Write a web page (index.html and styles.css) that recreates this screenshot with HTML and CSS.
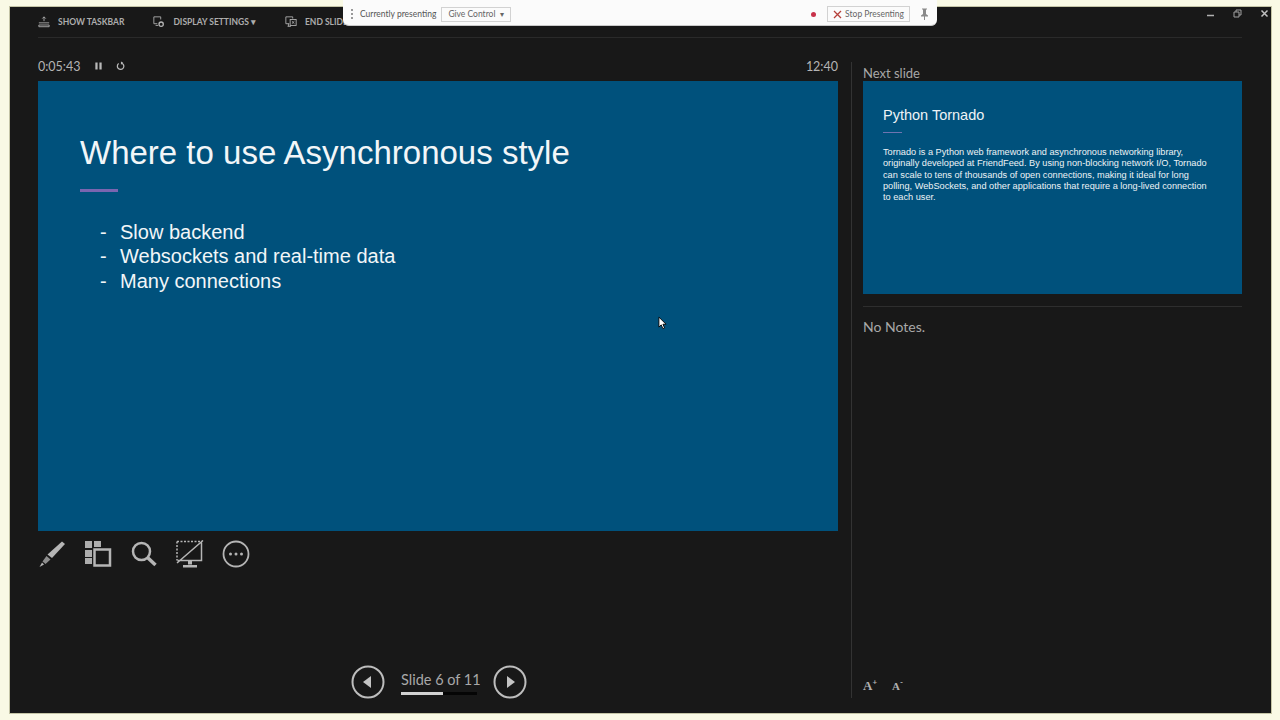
FILE: index.html
```html
<!DOCTYPE html>
<html lang="en">
<head>
<meta charset="utf-8">
<title>Presenter View</title>
<link rel="stylesheet" href="styles.css">
</head>
<body>
<div class="window">
  <header class="toolbar">
    <div class="tool-item">
      <svg class="tb-icon" viewBox="0 0 14 12"><path d="M7 0v5M5 2l2-2 2 2M1 7h12M1 9.500h12v2H1z" fill="none" stroke="#b5b5b5"/></svg>
      <span>SHOW TASKBAR</span>
    </div>
    <div class="tool-item">
      <svg class="tb-icon" viewBox="0 0 14 14"><path d="M5 9H1V1h8v3M3 11h3" fill="none" stroke="#b5b5b5"/><circle cx="9.500" cy="9.500" r="2.500" fill="none" stroke="#b5b5b5" stroke-width="1.500"/></svg>
      <span>DISPLAY SETTINGS ▾</span>
    </div>
    <div class="tool-item">
      <svg class="tb-icon" viewBox="0 0 14 14"><path d="M5 9H1V1h8v2M3 12h4M4 9v3" fill="none" stroke="#b5b5b5"/><rect x="6" y="4" width="7" height="7" fill="none" stroke="#b5b5b5"/><path d="M8 6l3 3M11 6l-3 3" stroke="#b5b5b5"/></svg>
      <span>END SLIDE SHOW</span>
    </div>
    <div class="win-controls">
      <svg class="win-icon" viewBox="0 0 9 9"><path d="M1 6.500h7" stroke="#b0b0b0" stroke-width="1.500"/></svg>
      <svg class="win-icon" viewBox="0 0 9 9"><path d="M1 3h5v5H1zM3 3V1h5v5H6" fill="none" stroke="#a0a0a0"/></svg>
      <svg class="win-icon" viewBox="0 0 9 9"><path d="M1.500 1.500l6 6M7.500 1.500l-6 6" stroke="#c0c0c0" stroke-width="1.500"/></svg>
    </div>
  </header>

  <main class="panes">
    <section class="current">
      <div class="timer-row">
        <span class="time">0:05:43</span>
        <svg class="timer-icon" viewBox="0 0 10 10"><path d="M1.500 1h2.500v8H1.500zM6 1h2.500v8H6z" fill="#b8b8b8"/></svg>
        <svg class="timer-icon" viewBox="0 0 10 10"><path d="M3 2.300a3.600 3.600 0 1 0 3.500-.4" fill="none" stroke="#b8b8b8" stroke-width="1.400"/><path d="M5.500 0v3.500L8 1.500z" fill="#b8b8b8"/></svg>
        <span class="clock">12:40</span>
      </div>
      <div class="slide">
        <h1>Where to use Asynchronous style</h1>
        <div class="rule"></div>
        <ul>
          <li>Slow backend</li>
          <li>Websockets and real-time data</li>
          <li>Many connections</li>
        </ul>
        <svg class="cursor" viewBox="0 0 10 15"><path d="M1 1v11l2.600-2.400 1.800 4.200 1.900-.8-1.800-4.100H9z" fill="#fff" stroke="#000"/></svg>
      </div>
      <div class="tools">
        <svg class="tool" viewBox="0 0 28 28"><path d="M24 1.500l3 2.500-13 14-4.500-3.500z" fill="#b5b5b5"/><path d="M8.500 16l4 3.500-5 4.500-3-2.500z" fill="#8e8e8e"/><path d="M4 22.500l2 2-4.500 2.500z" fill="#b5b5b5"/></svg>
        <svg class="tool" viewBox="0 0 28 28"><path d="M1 1h7v7H1zM10 1h7v6h-7zM1 10h7v7H1zM1 18h7v6H1z" fill="#adadad"/><path d="M10.500 9.500h15.500v16H10.500z" fill="none" stroke="#b5b5b5" stroke-width="2.500"/></svg>
        <svg class="tool" viewBox="0 0 28 28"><circle cx="11.500" cy="11.500" r="8.500" fill="none" stroke="#b5b5b5" stroke-width="2.500"/><path d="M17.500 17.500l8 7.500" stroke="#b5b5b5" stroke-width="3.500"/></svg>
        <svg class="tool" viewBox="0 0 28 28"><path d="M1 1.500h25M1 1.500v19" fill="none" stroke="#b5b5b5" stroke-width="1.500" stroke-dasharray="2 1.500"/><path d="M1.500 20.500h24V2.500M1 23L27 .5" fill="none" stroke="#b5b5b5" stroke-width="1.500"/><path d="M12 20.500h4v4h-4zM7 25h14v2.500H7z" fill="#b5b5b5"/></svg>
        <svg class="tool" viewBox="0 0 28 28"><circle cx="14" cy="14" r="12.500" fill="none" stroke="#b5b5b5" stroke-width="1.800"/><circle cx="8.500" cy="14" r="1.500" fill="#b5b5b5"/><circle cx="14" cy="14" r="1.500" fill="#b5b5b5"/><circle cx="19.500" cy="14" r="1.500" fill="#b5b5b5"/></svg>
      </div>
      <nav class="pager">
        <svg class="nav-btn" viewBox="0 0 34 34"><circle cx="17" cy="17" r="15.500" fill="none" stroke="#bdbdbd" stroke-width="2"/><path d="M20 11v12l-8-6z" fill="#c4c4c4"/></svg>
        <div class="count">
          <span>Slide 6 of 11</span>
          <div class="track"><div class="fill" style="width:55%"></div></div>
        </div>
        <svg class="nav-btn" viewBox="0 0 34 34"><circle cx="17" cy="17" r="15.500" fill="none" stroke="#bdbdbd" stroke-width="2"/><path d="M14 11v12l8-6z" fill="#c4c4c4"/></svg>
      </nav>
    </section>

    <aside class="side">
      <div class="next-label">Next slide</div>
      <div class="preview">
        <h2>Python Tornado</h2>
        <div class="mini-rule"></div>
        <p>Tornado is a Python web framework and asynchronous networking library, originally developed at FriendFeed. By using non-blocking network I/O, Tornado can scale to tens of thousands of open connections, making it ideal for long polling, WebSockets, and other applications that require a long-lived connection to each user.</p>
      </div>
      <div class="notes">No Notes.</div>
      <div class="font-tools">
        <span class="font-a big">A<sup>+</sup></span>
        <span class="font-a small">A<sup>-</sup></span>
      </div>
    </aside>
  </main>
</div>

<div class="share-bar">
  <div class="share-left">
    <span class="grip"></span>
    <span class="share-text">Currently presenting</span>
    <span class="share-btn">Give Control <i class="caret">▾</i></span>
  </div>
  <div class="share-right">
    <span class="rec"></span>
    <span class="share-btn stop">
      <svg class="x-icon" viewBox="0 0 9 9"><path d="M1 1l7 7M8 1L1 8" stroke="#b5403a" stroke-width="1.300"/></svg>
      Stop Presenting
    </span>
    <svg class="pin" viewBox="0 0 9 12"><path d="M2 .500h5v1H6v4.500l2 1.500v1H5v3.500H4V8.500H1v-1l2-1.500V1.500H2z" fill="#8a8a8a"/></svg>
  </div>
</div>
</body>
</html>
```
FILE: styles.css
```css
html, body { margin: 0; height: 100%; }
body {
  background: #f9f9e5;
  font-family: Lato, "Open Sans", sans-serif;
  color: #b4b4b4;
  overflow: hidden;
  padding: 6px 8px 6px 9px;
  box-sizing: border-box;
}
.window {
  height: 708px;
  background: #181818;
  border: 1px solid #c4c4a6;
  box-sizing: border-box;
  padding: 0 29px 0 28px;
  display: flex;
  flex-direction: column;
}
.toolbar {
  height: 31px;
  flex: none;
  border-bottom: 1px solid #2a2a2a;
  display: flex;
  align-items: center;
  gap: 29px;
  font-size: 8.500px;
  font-weight: 700;
  color: #adadad;
  padding-top: 0;
  box-sizing: border-box;
  position: relative;
}
.tool-item { display: flex; align-items: center; gap: 8px; white-space: nowrap; }
.tb-icon { width: 12px; height: 12px; }
.win-controls {
  position: absolute;
  right: -27px;
  top: 2px;
  display: flex;
  gap: 18px;
}
.win-icon { width: 9px; height: 9px; }
.panes { flex: 1; display: flex; min-height: 0; }
.current {
  width: 800px;
  flex: none;
  display: flex;
  flex-direction: column;
}
.timer-row {
  height: 43px;
  display: flex;
  align-items: center;
  font-size: 12.500px;
  padding-top: 13px;
  box-sizing: border-box;
  gap: 13px;
}
.clock { margin-left: auto; }
.timer-icon { width: 9px; height: 10px; }
.slide {
  height: 450px;
  background: #00517c;
  color: #f2f6f8;
  font-family: "Liberation Sans", Arial, sans-serif;
  padding: 53px 0 0 42px;
  box-sizing: border-box;
  position: relative;
}
.slide h1 { margin: 0; font-size: 33px; font-weight: 400; line-height: 38px; }
.rule { width: 38px; height: 3px; background: #7a65b0; margin-top: 17px; }
.slide ul { list-style: none; margin: 28px 0 0; padding: 0 0 0 20px; font-size: 20px; line-height: 24.300px; }
.slide li { position: relative; padding-left: 20px; }
.slide li::before { content: "-"; position: absolute; left: 0; }
.cursor { position: absolute; left: 620px; top: 235px; width: 9px; height: 14px; }
.tools {
  display: flex;
  gap: 18px;
  margin-top: 9px;
  height: 28px;
}
.tool { width: 28px; height: 28px; }
.pager {
  margin-top: 97px;
  margin-left: 313px;
  display: flex;
  align-items: center;
  gap: 16px;
}
.nav-btn { width: 34px; height: 34px; }
.count { width: 76px; font-size: 14.500px; color: #a8a8a8; white-space: nowrap; }
.count span { display: block; line-height: 18px; margin-top: 1px; }
.track { height: 3px; background: #050505; margin-top: 3px; }
.fill { height: 3px; background: #d2d2d2; }
.side {
  flex: 1;
  margin: 24px 0 0 13px;
  padding-left: 11px;
  border-left: 1px solid #333;
  display: flex;
  flex-direction: column;
  height: 636px;
  box-sizing: border-box;
}
.next-label { height: 20px; line-height: 12px; font-size: 13px; color: #a8a8a8; padding-top: 5px; box-sizing: content-box; height: 14px; margin-top: 0; }
.preview {
  height: 213px;
  background: #00517c;
  color: #eef3f6;
  font-family: "Liberation Sans", Arial, sans-serif;
  padding: 25px 28px 0 20px;
  box-sizing: border-box;
  border-bottom: 0;
}
.preview h2 { margin: 0; font-size: 14.500px; font-weight: 400; line-height: 18px; }
.mini-rule { width: 19px; height: 1px; background: #6f74b0; margin-top: 8px; }
.preview p { margin: 14px 0 0; font-size: 9.200px; line-height: 11.250px; }
.notes {
  border-top: 1px solid #2e2e2e;
  margin-top: 12px;
  padding-top: 11px;
  font-size: 14px;
  line-height: 18px;
  color: #a8a8a8;
  flex: 1;
}
.font-tools { display: flex; gap: 15px; height: 24px; align-items: center; font-family: "Liberation Serif", serif; font-weight: 700; color: #b0b0b0; }
.font-a sup { font-size: 8px; line-height: 0; font-family: Lato, sans-serif; }
.font-a.big { font-size: 13px; }
.font-a.small { font-size: 11px; }
.share-bar {
  position: absolute;
  left: 343px;
  top: 0;
  width: 594px;
  height: 26px;
  background: #fbfbfb;
  border-radius: 0 0 6px 6px;
  display: flex;
  justify-content: space-between;
  align-items: center;
  color: #555;
  font-size: 8.500px;
  box-sizing: border-box;
  padding: 3px 8px 0 8px;
  border-bottom: 1px solid #c9c9c9;
}
.share-left, .share-right { display: flex; align-items: center; }
.grip { width: 2px; height: 10px; border-left: 2px dotted #999; margin-right: 7px; box-sizing: border-box; }
.share-text { margin-right: 5px; }
.share-btn {
  border: 1px solid #d2d2d2;
  height: 15px;
  line-height: 14px;
  padding: 0 6px;
  box-sizing: border-box;
  display: inline-flex;
  align-items: center;
  gap: 3px;
  color: #666;
}
.caret { font-style: normal; font-size: 8px; margin-left: 2px; }
.rec { width: 5px; height: 5px; border-radius: 50%; background: #c8324a; margin-right: 11px; }
.x-icon { width: 9px; height: 9px; }
.stop { height: 16px; padding: 0 5px; }
.pin { width: 9px; height: 12px; margin-left: 10px; }
```
